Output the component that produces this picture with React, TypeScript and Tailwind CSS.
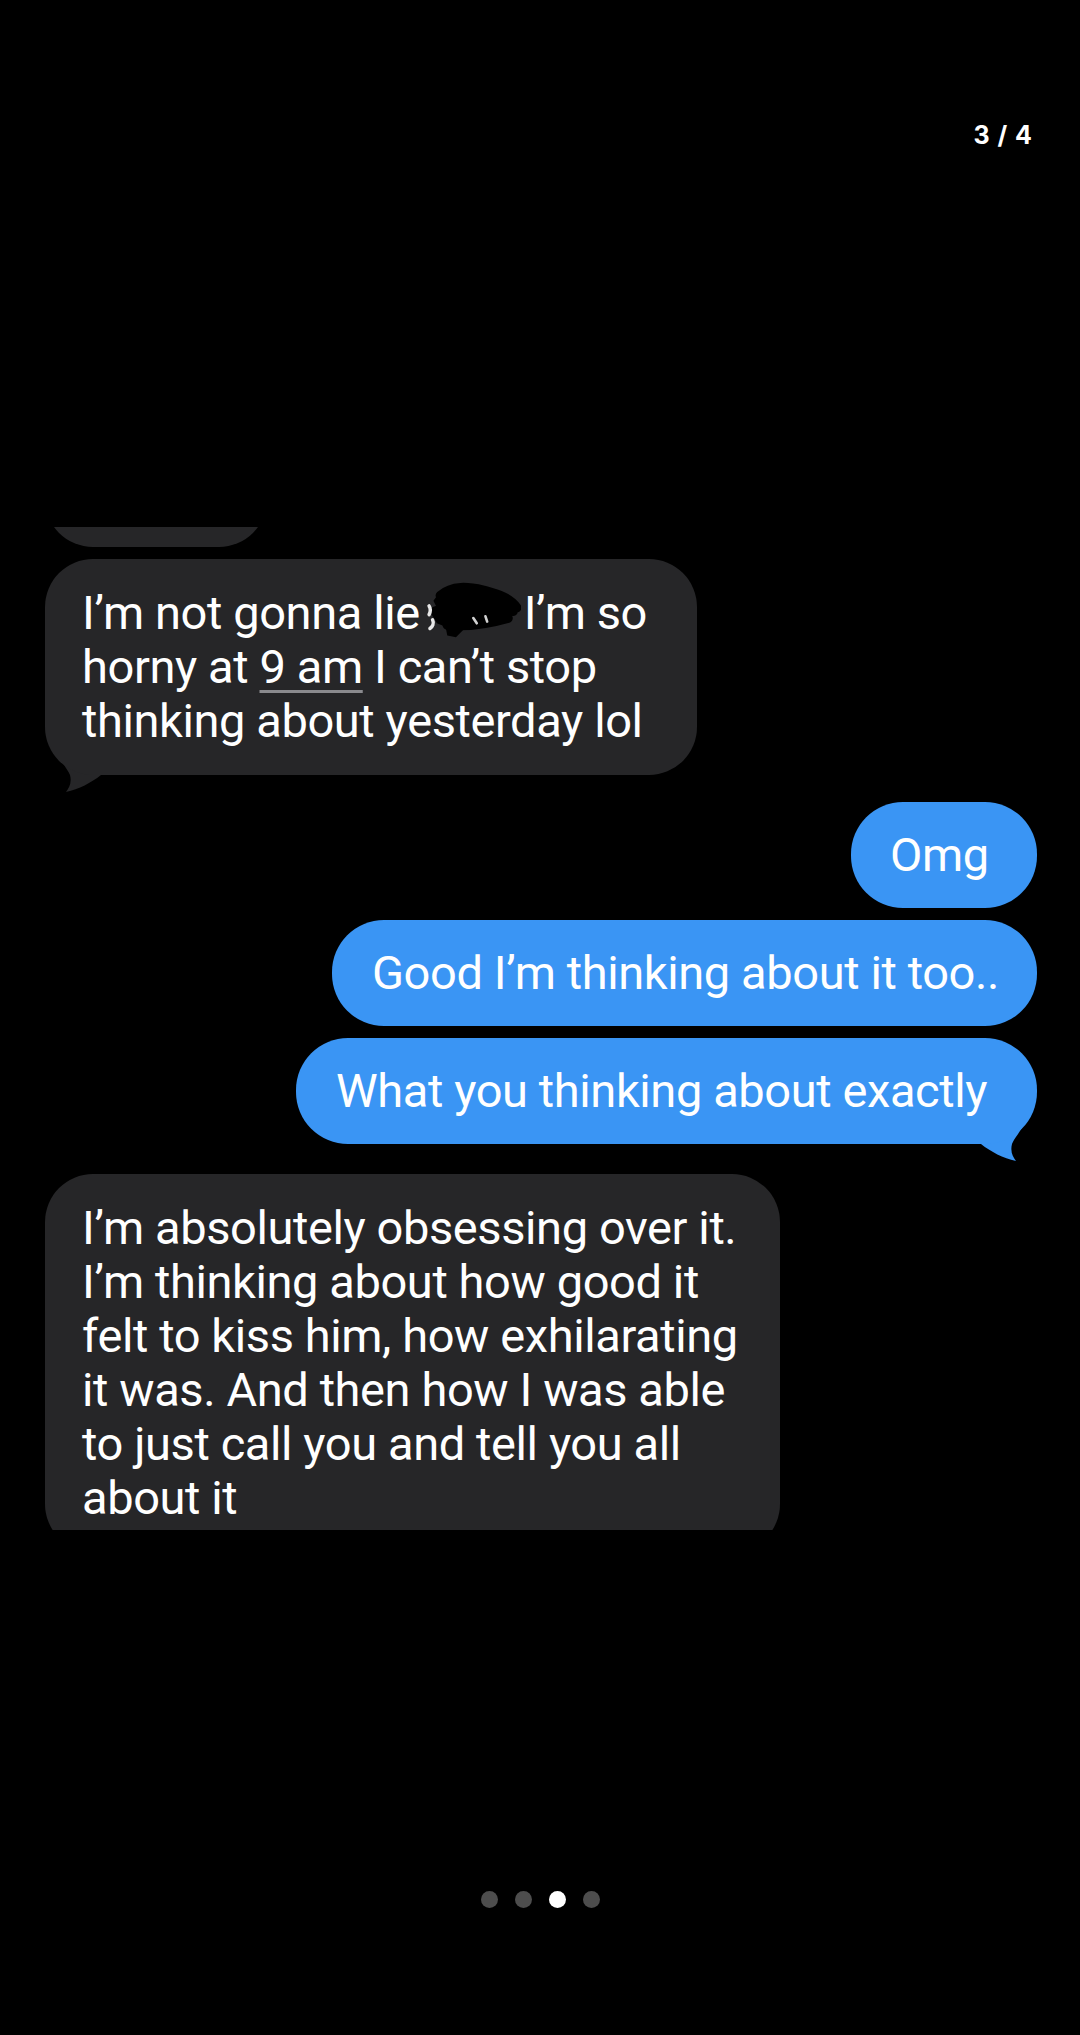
import React from "react";

const font = { fontFamily: "Roboto, 'Noto Sans', sans-serif" };
const bubbleText =
  "text-[47px] leading-[54px] tracking-[-0.4px] whitespace-nowrap";

function GrayTail() {
  return (
    <svg
      className="absolute left-0 bottom-[-20px]"
      width="70"
      height="60"
      viewBox="0 -40 70 60"
    >
      <path
        d="M6,-40 C10,-18 22,-8 25,0 C27,8 24,13 21,17 C34,14 46,8 56,0 L56,-40 Z"
        fill="#262628"
      />
    </svg>
  );
}

function BlueTail() {
  return (
    <svg
      className="absolute right-0 bottom-[-20px]"
      width="70"
      height="60"
      viewBox="-70 -40 70 60"
    >
      <path
        d="M-6,-40 C-10,-18 -22,-8 -25,0 C-27,8 -24,13 -21,17 C-34,14 -46,8 -56,0 L-56,-40 Z"
        fill="#3a95f4"
      />
    </svg>
  );
}

function Scribble() {
  return (
    <span className="relative inline-block w-[104px] h-[10px]">
      <svg
        className="absolute left-[3px] top-[-38px]"
        width="98"
        height="62"
        viewBox="0 0 113 62"
      >
        <path
          d="M18,10 L30,2 L44,6 L58,2 L72,8 L86,10 L98,16 L110,24 L106,34 L94,40 L80,46 L64,50 L48,50 L38,60 L28,58 L26,48 L16,44 L10,34 L16,26 L12,18 Z"
          fill="#000"
        />
        <path
          d="M20,12 C34,0 52,2 70,6 C84,10 100,14 108,26 M14,30 C40,20 70,22 104,30 M28,46 C50,48 70,46 98,38"
          stroke="#000"
          strokeWidth="11"
          fill="none"
          strokeLinecap="round"
        />
        <path
          d="M7,24 C9,27 9,30 7,34 M11,40 C13,44 11,48 8,50"
          stroke="#e8e8e8"
          strokeWidth="4"
          fill="none"
          strokeLinecap="round"
        />
        <path
          d="M58,38 L62,44 M72,36 L74,42"
          stroke="#d0d0d0"
          strokeWidth="3"
          fill="none"
          strokeLinecap="round"
        />
      </svg>
    </span>
  );
}

export default function App() {
  return (
    <div
      className="w-[1080px] h-[2035px] bg-black text-white flex flex-col overflow-hidden"
      style={font}
    >
      <div className="h-[527px] flex justify-end pr-[47px] pt-[120px]">
        <span
          className="text-[25px] leading-[30px] font-bold tracking-[1px]"
          style={{ fontFamily: "Inter, sans-serif" }}
        >
          3 / 4
        </span>
      </div>

      <div className="h-[1003px] overflow-hidden flex flex-col">
        {/* clipped previous bubble */}
        <div className="h-[20px] overflow-hidden relative shrink-0">
          <div className="absolute left-[45px] bottom-0 w-[222px] h-[100px] rounded-[48px] bg-[#262628]" />
        </div>

        {/* bubble 1 */}
        <div className="mt-[12px] ml-[45px] w-[652px] relative shrink-0">
          <div
            className={`bg-[#262628] rounded-[48px] pl-[37px] py-[27px] relative z-10 ${bubbleText}`}
          >
            <div>
              I’m not gonna lie
              <Scribble />
              I’m so
            </div>
            <div>
              horny at{" "}
              <span className="underline decoration-[#8a8a8e] decoration-[3px] underline-offset-[7px]">
                9 am
              </span>{" "}
              I can’t stop
            </div>
            <div>thinking about yesterday lol</div>
          </div>
          <GrayTail />
        </div>

        {/* blue bubbles */}
        <div className="mt-[27px] flex flex-col items-end pr-[43px] gap-[12px] shrink-0">
          <div
            className={`w-[186px] bg-[#3a95f4] rounded-[52px] pl-[39px] py-[26px] ${bubbleText}`}
          >
            Omg
          </div>
          <div
            className={`w-[705px] bg-[#3a95f4] rounded-[52px] pl-[40px] py-[26px] ${bubbleText}`}
          >
            Good I’m thinking about it too..
          </div>
          <div className="w-[741px] relative">
            <div
              className={`bg-[#3a95f4] rounded-[52px] pl-[40px] py-[26px] relative z-10 ${bubbleText}`}
            >
              What you thinking about exactly
            </div>
            <BlueTail />
          </div>
        </div>

        {/* bubble 4 */}
        <div className="mt-[30px] ml-[45px] w-[735px] shrink-0">
          <div
            className={`bg-[#262628] rounded-[48px] pl-[37px] py-[27px] ${bubbleText}`}
          >
            <div>I’m absolutely obsessing over it.</div>
            <div>I’m thinking about how good it</div>
            <div>felt to kiss him, how exhilarating</div>
            <div>it was. And then how I was able</div>
            <div>to just call you and tell you all</div>
            <div>about it</div>
          </div>
        </div>
      </div>

      <div className="pt-[361px] flex justify-center gap-[17px]">
        <span className="w-[17px] h-[17px] rounded-full bg-[#4d4d4d]" />
        <span className="w-[17px] h-[17px] rounded-full bg-[#4d4d4d]" />
        <span className="w-[17px] h-[17px] rounded-full bg-white" />
        <span className="w-[17px] h-[17px] rounded-full bg-[#4d4d4d]" />
      </div>
    </div>
  );
}
